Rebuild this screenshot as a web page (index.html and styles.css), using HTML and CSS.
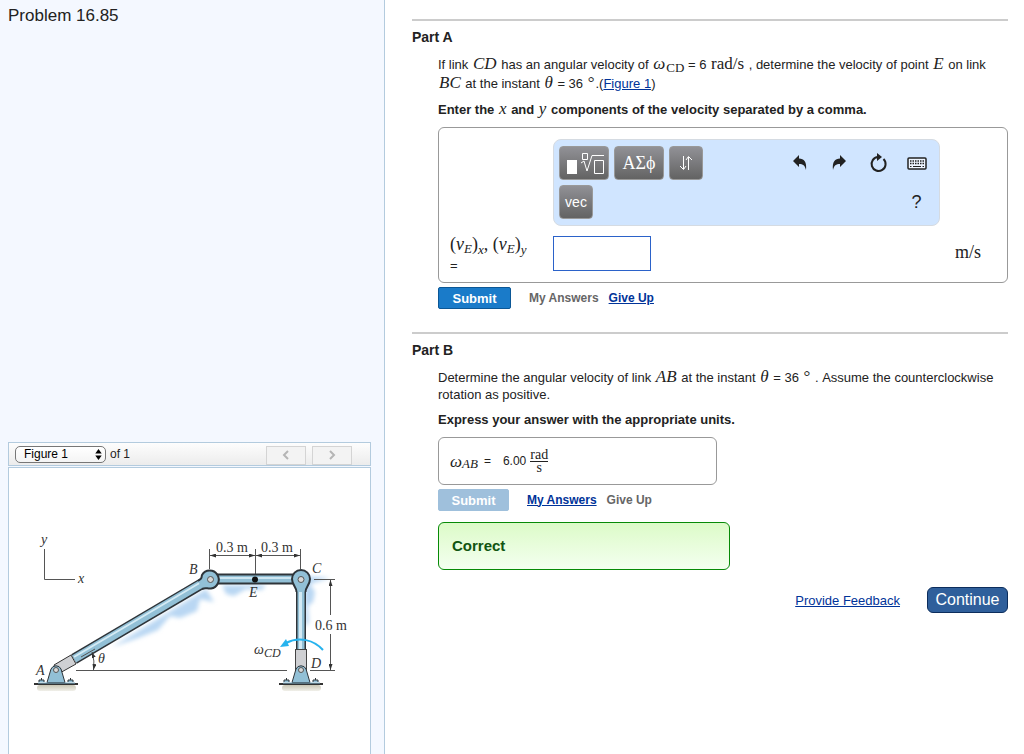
FILE: index.html
```html
<!DOCTYPE html>
<html lang="en">

<head>
	<meta charset="utf-8">
	<title>Problem 16.85</title>
	<link rel="stylesheet" href="styles.css">
</head>

<body>
	<aside class="sidebar">
		<h1>Problem 16.85</h1>
		<div class="figure">
			<div class="figure-bar">
				<span class="figure-select">
					<select id="figure" aria-label="Figure">
						<option>Figure 1</option>
					</select>
					<svg width="7" height="11" viewBox="0 0 7 12"><path d="M0 5L3.5 0L7 5ZM0 7L3.5 12L7 7Z"/></svg>
				</span>
				<label for="figure">of 1</label>
				<span class="figure-nav">
					<button type="button" aria-label="Previous" disabled><svg width="8" height="10" viewBox="0 0 8 10"><path d="M6 1L2 5L6 9"/></svg></button>
					<button type="button" aria-label="Next" disabled><svg width="8" height="10" viewBox="0 0 8 10"><path d="M2 1L6 5L2 9"/></svg></button>
				</span>
			</div>
			<div class="figure-body">
				<svg class="linkage" viewBox="9 468 361 286">
					<defs>
						<filter id="soft" x="-20%" y="-20%" width="140%" height="140%"><feGaussianBlur stdDeviation="2"/></filter>
						<marker id="tip" viewBox="0 0 6 4" refX="6" refY="2" markerWidth="6" markerHeight="4" orient="auto-start-reverse"><path d="M0 0L6 2L0 4Z" fill="#333"/></marker>
						<linearGradient id="ground" x1="0" y1="0" x2="0" y2="1"><stop offset="0" stop-color="#c9c6b4"/><stop offset="1" stop-color="#f1f0ea"/></linearGradient>
					</defs>

					<!-- shadows -->
					<g fill="#b9d7f3" filter="url(#soft)">
						<path d="M112 647L206 589L214 602L200 599L197 611L180 618L170 616L158 630L138 638Z"/>
						<path d="M222 585H266L262 590L246 589L234 596L226 594Z"/>
						<path d="M304 576L330 578L310 584L315 592L313 602L308 606L309 622L305 627Z"/>
					</g>

					<!-- dimension and axis lines -->
					<g class="thin">
						<path d="M44.500 549V579.500H75M209.500 549V569M255.500 549V579M300.500 549V569M314 579.500H335M310 670.500H335M76 670.500H287"/>
						<path d="M210 555.500H255" marker-start="url(#tip)" marker-end="url(#tip)"/>
						<path d="M256 555.500H300" marker-start="url(#tip)" marker-end="url(#tip)"/>
						<path d="M330.500 615V580" marker-end="url(#tip)"/>
						<path d="M330.500 634V670" marker-end="url(#tip)"/>
					</g>

					<!-- ground supports -->
					<rect x="37" y="685" width="39" height="6" rx="3" fill="url(#ground)"/>
					<rect x="282" y="685" width="39" height="6" rx="3" fill="url(#ground)"/>

					<!-- link AB -->
					<path d="M74 659L203 583" stroke="#2e3439" stroke-width="11"/>
					<path d="M74 659L206 581" stroke="#92c0d6" stroke-width="8"/>
					<path d="M74 657L203 581" stroke="#d4eaf4" stroke-width="2"/>
					<path d="M54 665L71 655L76 664L58 674Z" fill="#cfd0d3" stroke="#333"/>
					<g class="thin">
						<path d="M81 657L95 649"/>
						<path d="M93.500 670Q95 661 92 652" marker-start="url(#tip)" marker-end="url(#tip)"/>
					</g>

					<!-- link BC -->
					<path d="M216 579H296" stroke="#2e3439" stroke-width="11"/>
					<path d="M216 579H296" stroke="#92c0d6" stroke-width="7"/>
					<path d="M216 578H296" stroke="#cee6f1" stroke-width="2"/>

					<!-- link CD -->
					<path d="M301 584V651" stroke="#2e3439" stroke-width="10"/>
					<path d="M301 580V651" stroke="#92c0d6" stroke-width="7"/>
					<path d="M300.500 590V651" stroke="#d4eaf4" stroke-width="3"/>
					<rect x="295.500" y="649.500" width="11" height="21" fill="#cfd0d3" stroke="#444"/>

					<!-- joints B, C and E -->
					<g class="part">
						<path d="M198 581C203 578 201 578 202 575A9 9 0 1 1 211 588.500C207 589 206 587 202 589"/>
						<path d="M296.500 592C297 588 292 585 292 579A9 9 0 1 1 310 579C310 585 305 588 305.500 592"/>
					</g>
					<circle cx="255" cy="579.500" r="3" fill="#111"/>

					<!-- pin brackets A and D -->
					<g id="support">
						<g class="part">
							<path d="M47 682.500L51 669A5.500 5.500 0 0 1 61 669L65 682.500Z"/>
							<path d="M39 682V680H44V682M68 682V680H73V682M41.500 680V678M70.500 680V678"/>
						</g>
						<path d="M34 684H78" stroke="#333" stroke-width="2"/>
						<path d="M38 683H75" stroke="#7fb1ca" stroke-width="1"/>
					</g>
					<use href="#support" x="245"/>
					<g class="pin">
						<circle cx="56" cy="670" r="2.500"/>
						<circle cx="210.500" cy="579.500" r="3"/>
						<circle cx="301" cy="579.500" r="3"/>
						<circle cx="301" cy="670" r="2.500"/>
					</g>

					<!-- rotation arrow -->
					<path d="M323 650C314 640 299 636 286 643" fill="none" stroke="#27b3ee" stroke-width="2"/>
					<path d="M280 647L286 639L289 646Z" fill="#27b3ee"/>

					<g class="dims">
						<text x="216" y="552">0.3 m</text>
						<text x="261" y="552">0.3 m</text>
						<text x="315" y="630">0.6 m</text>
					</g>
					<g class="names">
						<text x="41" y="544">y</text>
						<text x="78" y="583">x</text>
						<text x="189" y="574">B</text>
						<text x="312" y="573">C</text>
						<text x="249" y="597">E</text>
						<text x="36" y="675">A</text>
						<text x="311" y="668">D</text>
						<text x="98" y="663">θ</text>
						<text x="254" y="654">ω<tspan class="small" dy="3">CD</tspan></text>
					</g>
				</svg>
			</div>
		</div>
	</aside>

	<main>
		<section class="part-a">
			<h2>Part A</h2>
			<div class="content">
				<p>If link <i>CD</i> has an angular velocity of <i>ω</i><sub class="roman">CD</sub> = 6 <span class="roman">rad/s</span> , determine the velocity of point <i>E</i> on link <i>BC</i> at the instant <i>θ</i> = 36 <span class="roman">°</span>.(<a href="#figure">Figure 1</a>)</p>
				<p class="ask">Enter the <i>x</i> and <i>y</i> components of the velocity separated by a comma.</p>
				<form class="answer">
					<div class="toolbar">
						<div class="keys">
							<button type="button" class="key wide" aria-label="Templates">
								<svg width="40" height="24" viewBox="0 0 40 24"><path d="M3 9H13V23H3Z" fill="#fff"/><path d="M18.500 2.500H23.500V8.500H18.500ZM30.500 9.500H39.500V22.500H30.500ZM17 12L20 10L23 20L28 4.500H40" fill="none" stroke="#fff"/></svg>
							</button>
							<button type="button" class="key wide greek">ΑΣϕ</button>
							<button type="button" class="key" aria-label="Arrows">
								<svg width="14" height="16" viewBox="0 0 14 16"><path d="M4.500 1V14M1 11L4.500 14.500L7 11M9.500 15V2M7 5L9.500 1.500L13 5" fill="none" stroke="#fff"/></svg>
							</button>
							<button type="button" class="key">vec</button>
						</div>
						<div class="tools">
							<button type="button" aria-label="Undo"><svg width="16" height="16" viewBox="0 0 16 16"><path d="M1 6L7 0V3.500C12 3.500 15 7 14 15C13 10.500 11 9 7 9V12Z"/></svg></button>
							<button type="button" aria-label="Redo"><svg width="16" height="16" viewBox="0 0 16 16"><path d="M15 6L9 0V3.500C4 3.500 1 7 2 15C3 10.500 5 9 9 9V12Z"/></svg></button>
							<button type="button" aria-label="Reset"><svg width="18" height="20" viewBox="0 0 18 20"><path d="M14.500 6A7 7 0 1 1 9 4" fill="none" stroke="#222" stroke-width="2"/><path d="M8 0L13 4L8 8Z"/></svg></button>
							<button type="button" aria-label="Keyboard"><svg width="20" height="13" viewBox="0 0 20 13"><rect x="1" y="1" width="18" height="11" rx="1" fill="#eef5ff" stroke="#222" stroke-width="1.500"/><path d="M3 4H17M3 6.500H17" stroke="#222" stroke-width="1.500" stroke-dasharray="1.500 1"/><path d="M3 9.500H4.500M6 9.500H14M15.500 9.500H17" stroke="#222"/></svg></button>
							<button type="button" class="help">?</button>
						</div>
					</div>
					<label for="velocity">(<i>v</i><sub><i>E</i></sub>)<sub class="low"><i>x</i></sub>, (<i>v</i><sub><i>E</i></sub>)<sub class="low"><i>y</i></sub><br><span class="equals">=</span></label>
					<input type="text" id="velocity">
					<span class="units">m/s</span>
				</form>
				<div class="actions">
					<button type="button" class="submit">Submit</button>
					<span>My Answers</span>
					<a href="#giveup">Give Up</a>
				</div>
			</div>
		</section>

		<section class="part-b">
			<h2>Part B</h2>
			<div class="content">
				<p>Determine the angular velocity of link <i>AB</i> at the instant <i>θ</i> = 36 <span class="roman">°</span> . Assume the counterclockwise rotation as positive.</p>
				<p class="ask">Express your answer with the appropriate units.</p>
				<div class="result">
					<i>ω</i><sub><i>AB</i></sub> <span class="value">=</span> <span class="value">6.00</span>
					<span class="fraction"><span>rad</span><span>s</span></span>
				</div>
				<div class="actions">
					<button type="button" class="submit" disabled>Submit</button>
					<a href="#answers">My Answers</a>
					<span>Give Up</span>
				</div>
				<div class="correct">Correct</div>
			</div>
		</section>

		<div class="bottom">
			<a href="#feedback">Provide Feedback</a>
			<button type="button" class="continue">Continue</button>
		</div>
	</main>
</body>

</html>
```
FILE: styles.css
```css
* {
	box-sizing: border-box;
}

body {
	display: flex;
	min-height: 100vh;
	margin: 0;
	background: white;
	color: #222;
	font-family: "Liberation Sans", Arial, sans-serif;
	font-size: 13px;
	line-height: 17px;
}

h1, h2, p {
	margin: 0;
}

button, select, input {
	margin: 0;
	padding: 0;
	font-family: inherit;
}

a {
	color: #003399;
}

/* left column */
.sidebar {
	display: flex;
	flex-direction: column;
	justify-content: space-between;
	width: 385px;
	flex-shrink: 0;
	padding: 6px 13px 0 8px;
	border-right: 1px solid #b3cbde;
	background: #f4f8ff;
}

h1 {
	font-size: 17px;
	font-weight: normal;
	line-height: 20px;
}

.figure-bar {
	display: flex;
	align-items: center;
	height: 24px;
	margin-bottom: 1px;
	padding: 0 18px 0 6px;
	border: 1px solid #b3cbde;
	background: linear-gradient(#fdfdfd, #ececec);
	font-size: 12px;
}

.figure-select {
	position: relative;
	margin-right: 4px;
}

.figure-select select {
	display: block;
	width: 91px;
	height: 17px;
	padding-left: 8px;
	border: 1px solid #777;
	border-radius: 5px;
	appearance: none;
	background: linear-gradient(white, #f4f4f4);
	color: black;
	font-size: 12px;
}

.figure-select svg {
	position: absolute;
	top: 3px;
	right: 4px;
}

.figure-nav {
	display: flex;
	gap: 6px;
	margin-left: auto;
	padding-top: 2px;
}

.figure-nav button {
	width: 40px;
	height: 19px;
	border: 1px solid #d4d4d4;
	background: #f3f3f3;
}

.figure-nav svg {
	display: block;
	margin: auto;
	fill: none;
	stroke: #b5b5b5;
	stroke-width: 2;
}

.figure-body {
	border: 1px solid #b3cbde;
	border-bottom: 0;
	background: white;
}

.linkage {
	display: block;
	width: 100%;
	font-family: "Liberation Serif", serif;
	font-size: 14px;
	fill: #333;
}

.thin {
	fill: none;
	stroke: #555;
}

.part {
	fill: #92c0d6;
	stroke: #2e3439;
	stroke-width: 2;
}

#support .part {
	stroke-width: 1;
}

.pin {
	fill: #d8d8d8;
	stroke: #555;
}

.names {
	font-style: italic;
}

.names .small {
	font-size: 12px;
}

/* right column */
main {
	flex: 1;
	padding: 19px 16px 20px 27px;
}

section {
	border-top: 2px solid #ccc;
}

.part-a {
	margin-bottom: 23px;
}

h2 {
	padding: 7px 0;
	font-size: 14px;
	line-height: 18px;
}

.content {
	padding: 2px 0 0 26px;
}

.content i, .roman {
	font-family: "Liberation Serif", serif;
	font-size: 17px;
	font-weight: normal;
}

p i, p .roman {
	margin: 0 1px;
}

sub {
	font-family: "Liberation Serif", serif;
	font-size: 13px;
	line-height: 12px;
	vertical-align: -3px;
}

.content sub i, .content sub.roman {
	margin: 0;
	font-size: 13px;
}

.ask {
	margin: 8px 0 9px;
	font-weight: bold;
}

.answer {
	display: grid;
	grid-template-columns: 114px 1fr 67px;
	row-gap: 10px;
	padding: 11px 0;
	border: 1px solid #999;
	border-radius: 6px;
}

.toolbar {
	display: flex;
	justify-content: space-between;
	grid-column: 2;
	padding: 6px 3px 6px 5px;
	border: 1px solid #d5dbe2;
	border-radius: 8px;
	background: #d0e5ff;
}

.keys {
	display: flex;
	flex-wrap: wrap;
	gap: 5px;
	width: 150px;
}

.key {
	width: 34px;
	height: 34px;
	border: 1px solid #999;
	border-radius: 4px;
	background: linear-gradient(#919196, #636363);
	color: white;
	font-size: 14px;
}

.key svg {
	display: block;
	margin: auto;
}

.key.wide {
	width: 50px;
}

.key.greek {
	font-family: "Liberation Serif", serif;
	font-size: 18px;
}

.tools {
	display: grid;
	grid-template-columns: repeat(4, 39px);
	grid-auto-rows: 34px;
	row-gap: 5px;
}

.tools button {
	border: 0;
	background: none;
	color: #222;
}

.tools svg {
	display: block;
	margin: auto;
	fill: #222;
}

.tools .help {
	grid-column: 4;
	font-size: 18px;
}

.answer label, .units {
	font-family: "Liberation Serif", serif;
	font-size: 18px;
}

.answer label {
	grid-column: 1;
	height: 35px;
	padding-left: 11px;
	line-height: 16px;
}

.answer label > i {
	font-size: 18px;
}

.content sub.low {
	vertical-align: -4px;
}

.equals {
	font-family: "Liberation Sans", Arial, sans-serif;
	font-size: 13px;
}

.answer input {
	width: 98px;
	height: 35px;
	border: 1px solid #2b62c9;
	font-size: 16px;
}

.units {
	padding-left: 15px;
	line-height: 32px;
}

.actions {
	display: flex;
	align-items: center;
	gap: 10px;
	margin-top: 4px;
	color: #666;
	font-size: 12px;
	font-weight: bold;
}

.submit {
	width: 73px;
	height: 22px;
	margin-right: 8px;
	border: 1px solid #0b5796;
	border-radius: 2px;
	background: #1a7bc9;
	color: white;
	font-size: 13px;
	font-weight: bold;
}

.submit:disabled {
	width: 71px;
	border-color: #9fc0dc;
	background: #9fc0dc;
}

.result {
	display: flex;
	align-items: center;
	width: 279px;
	height: 48px;
	padding-left: 11px;
	border: 1px solid #999;
	border-radius: 6px;
}

.result sub {
	padding-top: 6px;
}

.value {
	margin: 0 6px;
	font-size: 12px;
}

.fraction {
	display: flex;
	flex-direction: column;
	margin-left: -2px;
	font-family: "Liberation Serif", serif;
	font-size: 14px;
	line-height: 12px;
	text-align: center;
}

.fraction span:first-child {
	border-bottom: 1px solid #222;
}

.correct {
	width: 292px;
	margin-top: 11px;
	padding: 14px 13px 15px;
	border: 1px solid #078a07;
	border-radius: 6px;
	background: linear-gradient(#dcfbc8, #f4fff0);
	color: #115511;
	font-size: 15px;
	font-weight: bold;
}

.bottom {
	display: flex;
	justify-content: flex-end;
	align-items: center;
	gap: 27px;
	margin-top: 17px;
}

.continue {
	width: 81px;
	height: 26px;
	border: 1px solid #0c2d5c;
	border-radius: 6px;
	background: #2f5f9b;
	color: white;
	font-size: 16px;
}
```
